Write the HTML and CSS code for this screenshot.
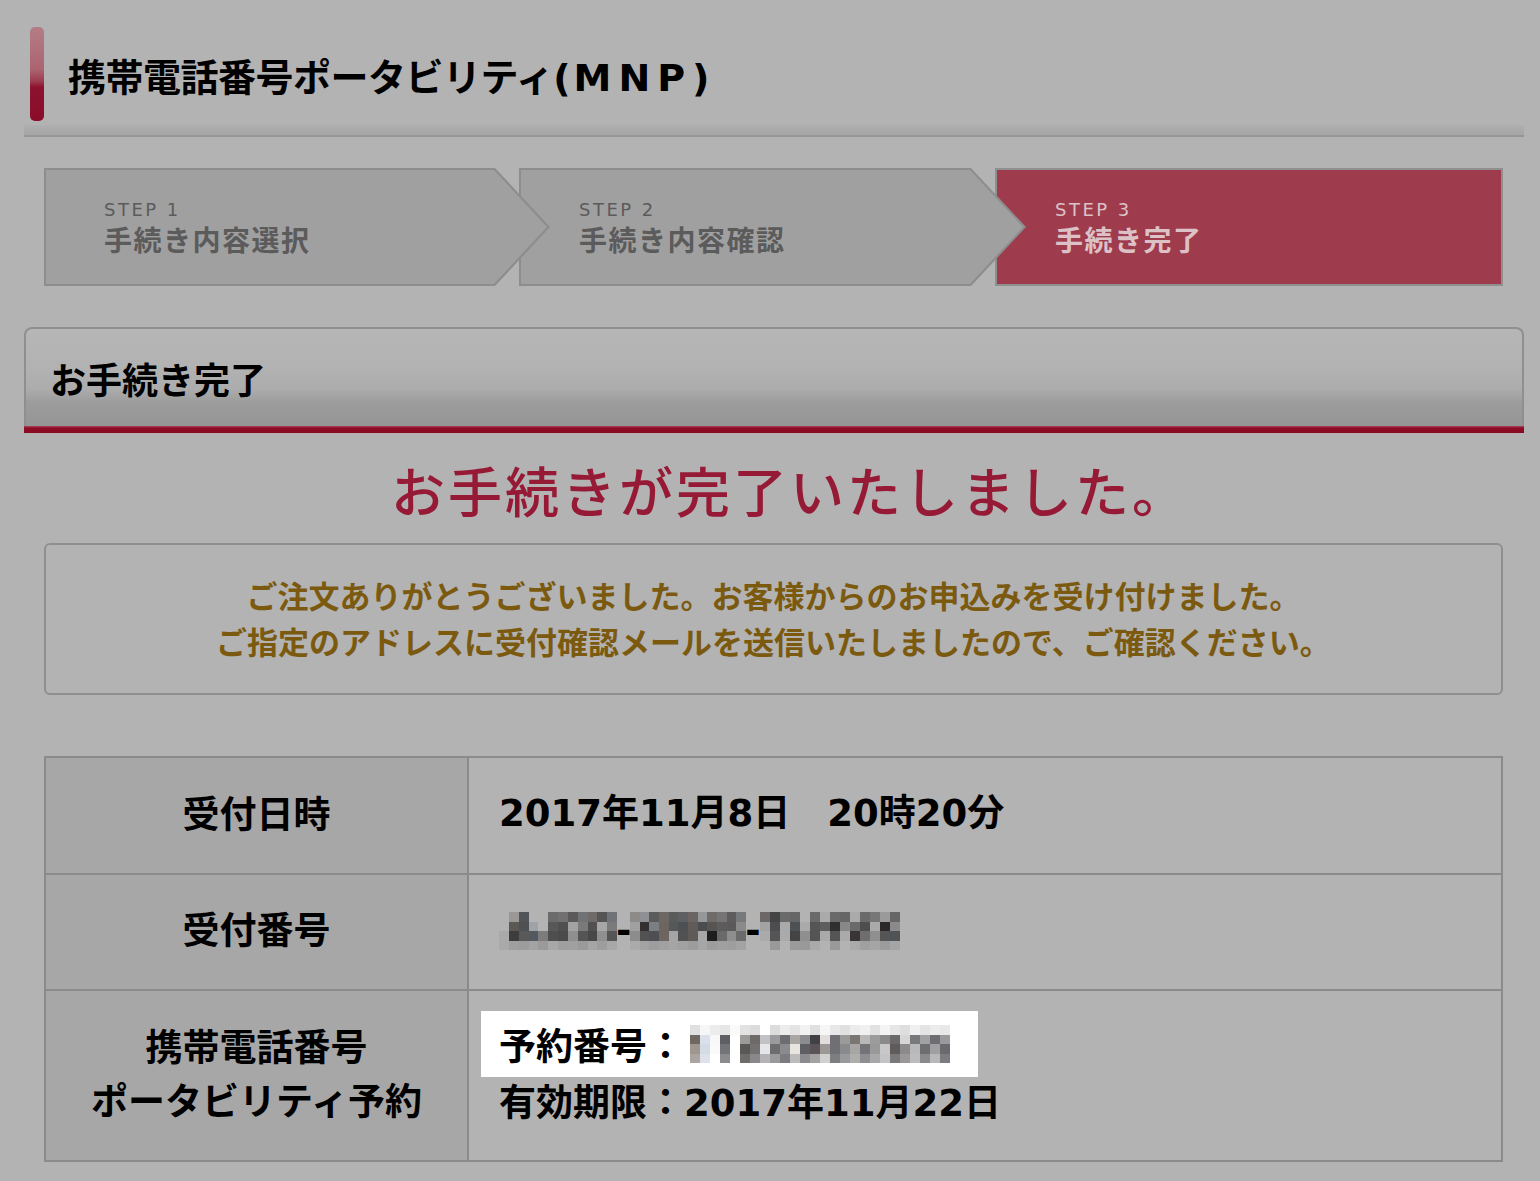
FILE: index.html
```html
<!DOCTYPE html>
<html lang="ja">
<head>
<meta charset="utf-8">
<title>携帯電話番号ポータビリティ(MNP)</title>
<link rel="stylesheet" href="styles.css">
</head>
<body>
<div class="page">
  <header class="page-title">
    <span class="title-bar"></span>
    <h1 class="title-text">携帯電話番号ポータビリティ<span class="paren">(</span><span class="abbr">MNP</span><span class="paren">)</span></h1>
  </header>
  <div class="title-rule"></div>

  <ol class="steps">
    <li class="step">
      <span class="step-num">STEP 1</span>
      <span class="step-name">手続き内容選択</span>
    </li>
    <li class="step">
      <span class="step-num">STEP 2</span>
      <span class="step-name">手続き内容確認</span>
    </li>
    <li class="step current">
      <span class="step-num">STEP 3</span>
      <span class="step-name">手続き完了</span>
    </li>
  </ol>

  <section class="panel">
    <div class="panel-head"><h2 class="panel-title">お手続き完了</h2></div>
    <div class="panel-rule"></div>
  </section>

  <p class="done">お手続きが完了いたしました。</p>

  <div class="notice">
    <p>ご注文ありがとうございました。お客様からのお申込みを受け付けました。</p>
    <p>ご指定のアドレスに受付確認メールを送信いたしましたので、ご確認ください。</p>
  </div>

  <table class="info">
    <tr class="row-a">
      <th>受付日時</th>
      <td><span class="num">2017</span>年<span class="num">11</span>月<span class="num">8</span>日　<span class="num">20</span>時<span class="num">20</span>分</td>
    </tr>
    <tr class="row-b">
      <th>受付番号</th>
      <td>
        <span class="receipt">
          <svg class="mosaic" width="118" height="38" viewBox="0 0 12 4" preserveAspectRatio="none" shape-rendering="crispEdges">
            <rect x="1" y="0" width="1" height="1" fill="#9a9795"/><rect x="2" y="0" width="1" height="1" fill="#51555a"/><rect x="5" y="0" width="1" height="1" fill="#6b6b6b"/><rect x="6" y="0" width="1" height="1" fill="#727070"/><rect x="7" y="0" width="1" height="1" fill="#5a5a5a"/><rect x="8" y="0" width="1" height="1" fill="#707275"/><rect x="9" y="0" width="1" height="1" fill="#6e6a68"/><rect x="10" y="0" width="1" height="1" fill="#555555"/><rect x="11" y="0" width="1" height="1" fill="#707478"/>
            <rect x="1" y="1" width="1" height="1" fill="#5c5955"/><rect x="2" y="1" width="1" height="1" fill="#4e5052"/><rect x="3" y="1" width="1" height="1" fill="#9fa3a7"/><rect x="5" y="1" width="1" height="1" fill="#585858"/><rect x="6" y="1" width="1" height="1" fill="#505050"/><rect x="7" y="1" width="1" height="1" fill="#a3a3a3"/><rect x="8" y="1" width="1" height="1" fill="#7a7a7a"/><rect x="9" y="1" width="1" height="1" fill="#525050"/><rect x="10" y="1" width="1" height="1" fill="#a7a7a7"/><rect x="11" y="1" width="1" height="1" fill="#7a7a7a"/>
            <rect x="0" y="2" width="1" height="1" fill="#aaaaaa"/><rect x="1" y="2" width="1" height="1" fill="#3d3d3d"/><rect x="2" y="2" width="1" height="1" fill="#595959"/><rect x="3" y="2" width="1" height="1" fill="#525960"/><rect x="4" y="2" width="1" height="1" fill="#7c7c7c"/><rect x="5" y="2" width="1" height="1" fill="#4e4e4e"/><rect x="6" y="2" width="1" height="1" fill="#4a4a4a"/><rect x="7" y="2" width="1" height="1" fill="#8f8f8f"/><rect x="8" y="2" width="1" height="1" fill="#555555"/><rect x="9" y="2" width="1" height="1" fill="#4a4747"/><rect x="10" y="2" width="1" height="1" fill="#909090"/><rect x="11" y="2" width="1" height="1" fill="#555555"/>
            <rect x="0" y="3" width="1" height="1" fill="#a9a9a9"/><rect x="1" y="3" width="1" height="1" fill="#9f9f9f"/><rect x="2" y="3" width="1" height="1" fill="#9c9c9c"/><rect x="3" y="3" width="1" height="1" fill="#a3a3a3"/><rect x="4" y="3" width="1" height="1" fill="#9a9a9a"/><rect x="5" y="3" width="1" height="1" fill="#a8a8a8"/><rect x="6" y="3" width="1" height="1" fill="#9f9f9f"/><rect x="7" y="3" width="1" height="1" fill="#a0a0a0"/><rect x="8" y="3" width="1" height="1" fill="#9a9a9a"/><rect x="9" y="3" width="1" height="1" fill="#a5a5a5"/><rect x="10" y="3" width="1" height="1" fill="#9d9d9d"/><rect x="11" y="3" width="1" height="1" fill="#a8a8a8"/>
          </svg><span class="dash">-</span><svg class="mosaic" width="116" height="38" viewBox="0 0 12 4" preserveAspectRatio="none" shape-rendering="crispEdges">
            <rect x="0" y="0" width="1" height="1" fill="#8e8a88"/><rect x="1" y="0" width="1" height="1" fill="#8e9096"/><rect x="2" y="0" width="1" height="1" fill="#5b5b5b"/><rect x="3" y="0" width="1" height="1" fill="#6d6764"/><rect x="4" y="0" width="1" height="1" fill="#5a5a5a"/><rect x="5" y="0" width="1" height="1" fill="#5d5f63"/><rect x="6" y="0" width="1" height="1" fill="#6a6462"/><rect x="7" y="0" width="1" height="1" fill="#959799"/><rect x="8" y="0" width="1" height="1" fill="#6e6b69"/><rect x="9" y="0" width="1" height="1" fill="#767474"/><rect x="10" y="0" width="1" height="1" fill="#5d5d5d"/><rect x="11" y="0" width="1" height="1" fill="#777a7d"/>
            <rect x="0" y="1" width="1" height="1" fill="#a0a0a0"/><rect x="1" y="1" width="1" height="1" fill="#353030"/><rect x="2" y="1" width="1" height="1" fill="#7a7f84"/><rect x="3" y="1" width="1" height="1" fill="#6e6460"/><rect x="4" y="1" width="1" height="1" fill="#555758"/><rect x="5" y="1" width="1" height="1" fill="#4e5154"/><rect x="6" y="1" width="1" height="1" fill="#605a58"/><rect x="7" y="1" width="1" height="1" fill="#4a4c4f"/><rect x="8" y="1" width="1" height="1" fill="#585454"/><rect x="9" y="1" width="1" height="1" fill="#5e5c5a"/><rect x="10" y="1" width="1" height="1" fill="#5a5a5a"/><rect x="11" y="1" width="1" height="1" fill="#8a8a8a"/>
            <rect x="0" y="2" width="1" height="1" fill="#8c8c8c"/><rect x="1" y="2" width="1" height="1" fill="#525252"/><rect x="2" y="2" width="1" height="1" fill="#4d4f52"/><rect x="3" y="2" width="1" height="1" fill="#6d6560"/><rect x="4" y="2" width="1" height="1" fill="#a5a5a5"/><rect x="5" y="2" width="1" height="1" fill="#4f5153"/><rect x="6" y="2" width="1" height="1" fill="#5e5a58"/><rect x="7" y="2" width="1" height="1" fill="#a7a7a7"/><rect x="8" y="2" width="1" height="1" fill="#1e1e1e"/><rect x="9" y="2" width="1" height="1" fill="#6a6a6a"/><rect x="10" y="2" width="1" height="1" fill="#8e8e8e"/><rect x="11" y="2" width="1" height="1" fill="#6b6b6b"/>
            <rect x="0" y="3" width="1" height="1" fill="#aaaaaa"/><rect x="1" y="3" width="1" height="1" fill="#a3a3a3"/><rect x="2" y="3" width="1" height="1" fill="#9d9d9d"/><rect x="3" y="3" width="1" height="1" fill="#a1a1a1"/><rect x="4" y="3" width="1" height="1" fill="#a5a5a5"/><rect x="5" y="3" width="1" height="1" fill="#a1a1a1"/><rect x="6" y="3" width="1" height="1" fill="#9c9c9c"/><rect x="7" y="3" width="1" height="1" fill="#a6a6a6"/><rect x="8" y="3" width="1" height="1" fill="#9d9d9d"/><rect x="9" y="3" width="1" height="1" fill="#a0a0a0"/><rect x="10" y="3" width="1" height="1" fill="#9e9e9e"/><rect x="11" y="3" width="1" height="1" fill="#a3a3a3"/>
          </svg><span class="dash">-</span><svg class="mosaic" width="140" height="38" viewBox="0 0 14 4" preserveAspectRatio="none" shape-rendering="crispEdges">
            <rect x="0" y="0" width="1" height="1" fill="#6d6767"/><rect x="1" y="0" width="1" height="1" fill="#444444"/><rect x="2" y="0" width="1" height="1" fill="#6a6a6a"/><rect x="3" y="0" width="1" height="1" fill="#666666"/><rect x="5" y="0" width="1" height="1" fill="#6a6a6a"/><rect x="6" y="0" width="1" height="1" fill="#aaaaaa"/><rect x="7" y="0" width="1" height="1" fill="#6a6a6a"/><rect x="8" y="0" width="1" height="1" fill="#666666"/><rect x="9" y="0" width="1" height="1" fill="#aaaaaa"/><rect x="10" y="0" width="1" height="1" fill="#6c6a6a"/><rect x="11" y="0" width="1" height="1" fill="#777777"/><rect x="12" y="0" width="1" height="1" fill="#9a9a9a"/><rect x="13" y="0" width="1" height="1" fill="#666666"/>
            <rect x="0" y="1" width="1" height="1" fill="#a3a3a3"/><rect x="1" y="1" width="1" height="1" fill="#4d4d4f"/><rect x="2" y="1" width="1" height="1" fill="#aaaaaa"/><rect x="3" y="1" width="1" height="1" fill="#4e5153"/><rect x="4" y="1" width="1" height="1" fill="#aaaaaa"/><rect x="5" y="1" width="1" height="1" fill="#555555"/><rect x="6" y="1" width="1" height="1" fill="#5e5e5e"/><rect x="7" y="1" width="1" height="1" fill="#2f2f2f"/><rect x="8" y="1" width="1" height="1" fill="#888888"/><rect x="9" y="1" width="1" height="1" fill="#6a6a6a"/><rect x="10" y="1" width="1" height="1" fill="#4e4e4e"/><rect x="11" y="1" width="1" height="1" fill="#aaaaaa"/><rect x="12" y="1" width="1" height="1" fill="#2a2828"/><rect x="13" y="1" width="1" height="1" fill="#8a8a8a"/>
            <rect x="0" y="2" width="1" height="1" fill="#aaaaaa"/><rect x="1" y="2" width="1" height="1" fill="#555557"/><rect x="2" y="2" width="1" height="1" fill="#aaaaaa"/><rect x="3" y="2" width="1" height="1" fill="#444444"/><rect x="4" y="2" width="1" height="1" fill="#8f8f8f"/><rect x="5" y="2" width="1" height="1" fill="#545456"/><rect x="6" y="2" width="1" height="1" fill="#aaaaaa"/><rect x="7" y="2" width="1" height="1" fill="#555555"/><rect x="8" y="2" width="1" height="1" fill="#aaaaaa"/><rect x="9" y="2" width="1" height="1" fill="#3a3535"/><rect x="10" y="2" width="1" height="1" fill="#6e6e6e"/><rect x="11" y="2" width="1" height="1" fill="#8f8f8f"/><rect x="12" y="2" width="1" height="1" fill="#555555"/><rect x="13" y="2" width="1" height="1" fill="#505356"/>
            <rect x="1" y="3" width="1" height="1" fill="#999999"/><rect x="3" y="3" width="1" height="1" fill="#9a9a9a"/><rect x="4" y="3" width="1" height="1" fill="#999999"/><rect x="5" y="3" width="1" height="1" fill="#aaaaaa"/><rect x="7" y="3" width="1" height="1" fill="#999999"/><rect x="9" y="3" width="1" height="1" fill="#aaaaaa"/><rect x="10" y="3" width="1" height="1" fill="#a0a0a0"/><rect x="11" y="3" width="1" height="1" fill="#a5a5a5"/><rect x="12" y="3" width="1" height="1" fill="#9c9c9c"/><rect x="13" y="3" width="1" height="1" fill="#a5a5a5"/>
          </svg>
        </span>
      </td>
    </tr>
    <tr class="row-c">
      <th><span class="th-line">携帯電話番号</span><span class="th-line">ポータビリティ予約</span></th>
      <td>
        <div class="reserve">
          <span>予約番号：</span>
          <svg class="mosaic" width="260" height="38" viewBox="0 0 26 4" preserveAspectRatio="none" shape-rendering="crispEdges">
            <rect x="0" y="0" width="1" height="1" fill="#e0e0e0"/><rect x="1" y="0" width="1" height="1" fill="#f4f6f8"/><rect x="2" y="0" width="1" height="1" fill="#ececec"/><rect x="3" y="0" width="1" height="1" fill="#e6e6e6"/><rect x="4" y="0" width="1" height="1" fill="#fafafa"/><rect x="5" y="0" width="1" height="1" fill="#e2e2e2"/><rect x="6" y="0" width="1" height="1" fill="#dcdcdc"/><rect x="7" y="0" width="1" height="1" fill="#ffffff"/><rect x="8" y="0" width="1" height="1" fill="#dcdcdc"/><rect x="9" y="0" width="1" height="1" fill="#ececec"/><rect x="10" y="0" width="1" height="1" fill="#e4e4e4"/><rect x="11" y="0" width="1" height="1" fill="#f2f2f2"/><rect x="12" y="0" width="1" height="1" fill="#e0e0e0"/><rect x="13" y="0" width="1" height="1" fill="#f6f6f6"/><rect x="14" y="0" width="1" height="1" fill="#e8e8e8"/><rect x="15" y="0" width="1" height="1" fill="#e0e0e0"/><rect x="16" y="0" width="1" height="1" fill="#ececec"/><rect x="17" y="0" width="1" height="1" fill="#f0f0f0"/><rect x="18" y="0" width="1" height="1" fill="#e2e2e2"/><rect x="19" y="0" width="1" height="1" fill="#f4f4f4"/><rect x="20" y="0" width="1" height="1" fill="#e6e6e6"/><rect x="21" y="0" width="1" height="1" fill="#dedede"/><rect x="22" y="0" width="1" height="1" fill="#f0f0f0"/><rect x="23" y="0" width="1" height="1" fill="#e4e4e4"/><rect x="24" y="0" width="1" height="1" fill="#ececec"/><rect x="25" y="0" width="1" height="1" fill="#e8e8e8"/>
            <rect x="0" y="1" width="1" height="1" fill="#6e6762"/><rect x="1" y="1" width="1" height="1" fill="#dbe1ea"/><rect x="2" y="1" width="1" height="1" fill="#f8f8f8"/><rect x="3" y="1" width="1" height="1" fill="#5e5f64"/><rect x="4" y="1" width="1" height="1" fill="#ffffff"/><rect x="5" y="1" width="1" height="1" fill="#9c9a98"/><rect x="6" y="1" width="1" height="1" fill="#6c6966"/><rect x="7" y="1" width="1" height="1" fill="#c2c2c4"/><rect x="8" y="1" width="1" height="1" fill="#9b9b9d"/><rect x="9" y="1" width="1" height="1" fill="#6b6d70"/><rect x="10" y="1" width="1" height="1" fill="#a9a6a4"/><rect x="11" y="1" width="1" height="1" fill="#8a8c90"/><rect x="12" y="1" width="1" height="1" fill="#404045"/><rect x="13" y="1" width="1" height="1" fill="#e2dede"/><rect x="14" y="1" width="1" height="1" fill="#707074"/><rect x="15" y="1" width="1" height="1" fill="#9a9a9a"/><rect x="16" y="1" width="1" height="1" fill="#7a7674"/><rect x="17" y="1" width="1" height="1" fill="#b8b8b8"/><rect x="18" y="1" width="1" height="1" fill="#9c9c9c"/><rect x="19" y="1" width="1" height="1" fill="#8b8a8a"/><rect x="20" y="1" width="1" height="1" fill="#6a6868"/><rect x="21" y="1" width="1" height="1" fill="#d6d6d6"/><rect x="22" y="1" width="1" height="1" fill="#79797b"/><rect x="23" y="1" width="1" height="1" fill="#a0a1a3"/><rect x="24" y="1" width="1" height="1" fill="#6e6e72"/><rect x="25" y="1" width="1" height="1" fill="#9a9a9c"/>
            <rect x="0" y="2" width="1" height="1" fill="#9f9690"/><rect x="1" y="2" width="1" height="1" fill="#d5dbe4"/><rect x="2" y="2" width="1" height="1" fill="#fafafa"/><rect x="3" y="2" width="1" height="1" fill="#737477"/><rect x="4" y="2" width="1" height="1" fill="#ffffff"/><rect x="5" y="2" width="1" height="1" fill="#5a5856"/><rect x="6" y="2" width="1" height="1" fill="#737070"/><rect x="7" y="2" width="1" height="1" fill="#e4e6ea"/><rect x="8" y="2" width="1" height="1" fill="#6e6c6c"/><rect x="9" y="2" width="1" height="1" fill="#8a8b8e"/><rect x="10" y="2" width="1" height="1" fill="#e8e4e0"/><rect x="11" y="2" width="1" height="1" fill="#5e5f62"/><rect x="12" y="2" width="1" height="1" fill="#5a5458"/><rect x="13" y="2" width="1" height="1" fill="#9c9896"/><rect x="14" y="2" width="1" height="1" fill="#6e7074"/><rect x="15" y="2" width="1" height="1" fill="#8a8a8c"/><rect x="16" y="2" width="1" height="1" fill="#a8a6a4"/><rect x="17" y="2" width="1" height="1" fill="#737477"/><rect x="18" y="2" width="1" height="1" fill="#9a999a"/><rect x="19" y="2" width="1" height="1" fill="#c8c8ca"/><rect x="20" y="2" width="1" height="1" fill="#5e5b5a"/><rect x="21" y="2" width="1" height="1" fill="#8c8a8a"/><rect x="22" y="2" width="1" height="1" fill="#b9b9bb"/><rect x="23" y="2" width="1" height="1" fill="#6c6e70"/><rect x="24" y="2" width="1" height="1" fill="#a0a0a2"/><rect x="25" y="2" width="1" height="1" fill="#6a6a6e"/>
            <rect x="0" y="3" width="1" height="1" fill="#aca4a0"/><rect x="1" y="3" width="1" height="1" fill="#dde2ea"/><rect x="2" y="3" width="1" height="1" fill="#ffffff"/><rect x="3" y="3" width="1" height="1" fill="#8c8c8e"/><rect x="4" y="3" width="1" height="1" fill="#ffffff"/><rect x="5" y="3" width="1" height="1" fill="#6e6c6a"/><rect x="6" y="3" width="1" height="1" fill="#8a8888"/><rect x="7" y="3" width="1" height="1" fill="#b4b4b6"/><rect x="8" y="3" width="1" height="1" fill="#9a9a9c"/><rect x="9" y="3" width="1" height="1" fill="#7a7c80"/><rect x="10" y="3" width="1" height="1" fill="#bcbcbc"/><rect x="11" y="3" width="1" height="1" fill="#8c8c90"/><rect x="12" y="3" width="1" height="1" fill="#a4a2a2"/><rect x="13" y="3" width="1" height="1" fill="#d0d0d0"/><rect x="14" y="3" width="1" height="1" fill="#7c7e80"/><rect x="15" y="3" width="1" height="1" fill="#9a9a9c"/><rect x="16" y="3" width="1" height="1" fill="#b0aeac"/><rect x="17" y="3" width="1" height="1" fill="#8c8e90"/><rect x="18" y="3" width="1" height="1" fill="#a8a8aa"/><rect x="19" y="3" width="1" height="1" fill="#c4c4c6"/><rect x="20" y="3" width="1" height="1" fill="#7a7878"/><rect x="21" y="3" width="1" height="1" fill="#9a9898"/><rect x="22" y="3" width="1" height="1" fill="#bcbcbe"/><rect x="23" y="3" width="1" height="1" fill="#8a8a8c"/><rect x="24" y="3" width="1" height="1" fill="#b8b8ba"/><rect x="25" y="3" width="1" height="1" fill="#7c7c80"/>
          </svg>
        </div>
        <div class="expiry">有効期限：<span class="num">2017</span>年<span class="num">11</span>月<span class="num">22</span>日</div>
      </td>
    </tr>
  </table>
</div>
</body>
</html>
```

FILE: styles.css
```css
* {
  box-sizing: border-box;
}

html, body {
  margin: 0;
  padding: 0;
}

body {
  background: #b3b3b3;
  min-height: 1181px;
  font-family: "Noto Sans CJK JP", "DejaVu Sans", sans-serif;
  color: #000;
}

.page {
  padding: 27px 16px 0 24px;
}

/* ---------- title ---------- */
.page-title {
  display: flex;
  align-items: center;
  height: 94px;
}

.title-bar {
  width: 14px;
  height: 94px;
  margin-left: 6px;
  border-radius: 5px;
  background: linear-gradient(to bottom, #b47d86 0%, #ab6471 45%, #9c3a4d 58%, #8e1230 64%, #8a0c29 100%);
}

.title-text {
  margin: 0 0 0 24px;
  padding-top: 4px;
  font-size: 38px;
  font-weight: 700;
  line-height: 1;
  letter-spacing: -0.5px;
}

.title-text .paren {
  font-family: "DejaVu Sans", sans-serif;
  font-weight: 700;
  letter-spacing: 0;
}

.title-text .abbr {
  font-family: "DejaVu Sans", sans-serif;
  font-weight: 700;
  letter-spacing: 7px;
  margin-left: 3px;
}

.title-rule {
  margin-top: 4px;
  height: 12px;
  background: linear-gradient(to bottom, #afafaf, #a6a6a6);
  border-bottom: 2px solid #979797;
}

/* ---------- steps ---------- */
.steps {
  list-style: none;
  margin: 31px 21px 0 20px;
  padding: 0;
  display: grid;
  grid-template-columns: 451px 452px 1fr;
  column-gap: 24px;
  height: 118px;
}

.step {
  position: relative;
  display: flex;
  flex-direction: column;
  justify-content: center;
  padding: 2px 0 0 60px;
  color: #5b5b5b;
}

.step:nth-child(1) { z-index: 3; }
.step:nth-child(2) { z-index: 2; }
.step:nth-child(3) { z-index: 1; }

.step::before,
.step::after {
  content: "";
  position: absolute;
  z-index: -1;
}

.step::before {
  left: 0;
  top: 0;
  bottom: 0;
  width: calc(100% + 55px);
  background: #8d8d8d;
  clip-path: polygon(0 0, calc(100% - 55px) 0, 100% 50%, calc(100% - 55px) 100%, 0 100%);
}

.step::after {
  left: 2px;
  top: 2px;
  bottom: 2px;
  width: calc(100% + 50px);
  background: #a0a0a0;
  clip-path: polygon(0 0, calc(100% - 53px) 0, 100% 50%, calc(100% - 53px) 100%, 0 100%);
}

.step.current::before {
  width: 100%;
  clip-path: none;
  background: #8f8f8f;
}

.step.current::after {
  right: 2px;
  width: auto;
  clip-path: none;
  background: #9e3c4e;
}

.step.current {
  color: #dcc2c7;
}

.step-num {
  font-family: "DejaVu Sans", sans-serif;
  font-size: 18px;
  letter-spacing: 2.5px;
  line-height: 22px;
}

.step-name {
  font-size: 28px;
  font-weight: 700;
  line-height: 36px;
  letter-spacing: 1.5px;
}

/* ---------- panel heading ---------- */
.panel {
  margin-top: 41px;
}

.panel-head {
  height: 99px;
  border: 2px solid #8f8f8f;
  border-bottom: none;
  border-radius: 8px 8px 0 0;
  background: linear-gradient(to bottom, #b6b6b6 0%, #b2b2b2 40%, #acacac 62%, #9c9c9c 76%, #959595 100%);
  display: flex;
  align-items: center;
  padding: 0 0 0 24px;
}

.panel-title {
  margin: 0;
  font-size: 36px;
  font-weight: 700;
  line-height: 1;
}

.panel-rule {
  height: 7px;
  background: linear-gradient(to bottom, #a84a5d 0, #8e0c26 2px, #880a22 100%);
}

/* ---------- completion message ---------- */
.done {
  margin: 24px 0 0;
  padding: 0 0 4px 32px;
  text-align: center;
  font-size: 54px;
  font-weight: 500;
  line-height: 65px;
  color: #961a36;
  letter-spacing: 3px;
}

.notice {
  margin: 17px 21px 0 20px;
  border: 2px solid #8f8f8f;
  border-radius: 6px;
  padding: 27px 0 29px;
  text-align: center;
  color: #7b5a10;
  font-size: 31px;
  font-weight: 700;
  line-height: 46px;
}

.notice p {
  margin: 0;
}

/* ---------- info table ---------- */
.info {
  margin: 61px 21px 0 20px;
  width: calc(100% - 41px);
  border-collapse: collapse;
  border: 2px solid #8b8b8b;
}

.info th,
.info td {
  border: 2px solid #8b8b8b;
  font-size: 37px;
  font-weight: 700;
  vertical-align: middle;
}

.info th {
  width: 423px;
  background: #a7a7a7;
  text-align: center;
  padding: 0 0 8px;
  line-height: 54px;
}

.info td {
  text-align: left;
  padding: 0 0 8px 30px;
  line-height: 54px;
}

.row-a { height: 117px; }
.row-b { height: 116px; }
.row-c { height: 171px; }

.row-b td {
  padding-bottom: 14px;
}

.row-c td {
  padding-bottom: 14px;
}

.th-line {
  display: block;
}

.num {
  font-family: "DejaVu Sans", sans-serif;
  font-weight: 700;
}

.receipt {
  display: inline-flex;
  align-items: center;
  vertical-align: middle;
}

.mosaic {
  display: block;
}

.dash {
  font-family: "DejaVu Sans", sans-serif;
  font-weight: 700;
  line-height: 1;
  margin: 0 -1px;
}

.reserve {
  display: inline-flex;
  align-items: center;
  height: 66px;
  margin: 0 0 0 -18px;
  padding: 0 28px 0 18px;
  background: #fff;
}

.reserve .mosaic {
  margin-left: 6px;
}

.expiry {
  line-height: 46px;
}
```
